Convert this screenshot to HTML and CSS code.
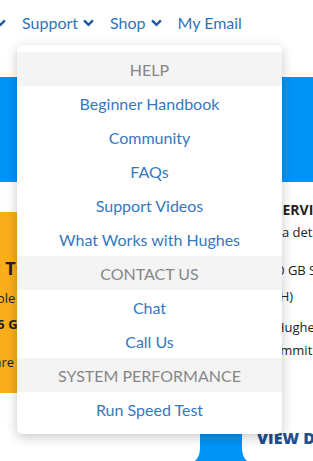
FILE: index.html
```html
<!DOCTYPE html>
<html lang="en">
	<head>
		<meta charset="UTF-8" />
		<meta name="viewport" content="width=device-width, initial-scale=1.0" />
		<title>Support menu</title>
		<link rel="stylesheet" href="styles.css">
	</head>
	<body>
		<div class="page">
			<nav class="topnav">
				<span class="navitem cut"><svg class="chev" viewBox="0 0 10 7"><path d="M1 1.2 5 5.2 9 1.2" /></svg></span>
				<span class="navitem">Support <svg class="chev" viewBox="0 0 10 7"><path d="M1 1.2 5 5.2 9 1.2" /></svg></span>
				<span class="navitem">Shop <svg class="chev" viewBox="0 0 10 7"><path d="M1 1.2 5 5.2 9 1.2" /></svg></span>
				<span class="navitem">My Email</span>
			</nav>

			<div class="gap-strip"></div>
			<div class="hero"></div>

			<div class="plans">
				<div class="card orange">
					<p class="bold big">UP TO</p>
					<p>available in</p>
					<p class="bold">25 GB,</p>
					<p class="late">compare to</p>
				</div>
				<div class="card info">
					<p class="bold head">FAST SERVICE</p>
					<p>Here's a detailed</p>
					<p class="sp1">Up to 50 GB Standard</p>
					<p class="sp2">(10 GB/H)</p>
					<p class="sp3">from Hughes</p>
					<p class="sp4">Zero commitment</p>
					<div class="cta">
						<svg class="tab" viewBox="0 0 56 48"><path d="M7 0H49V33C49 42 52 46 56 48H0C4 46 7 42 7 33Z" /></svg>
						<span class="viewlink">VIEW DETAILS</span>
					</div>
				</div>
			</div>

			<div class="dropdown">
				<div class="group">HELP</div>
				<a href="#">Beginner Handbook</a>
				<a href="#">Community</a>
				<a href="#">FAQs</a>
				<a href="#">Support Videos</a>
				<a href="#">What Works with Hughes</a>
				<div class="group">CONTACT US</div>
				<a href="#">Chat</a>
				<a href="#">Call Us</a>
				<div class="group">SYSTEM PERFORMANCE</div>
				<a href="#">Run Speed Test</a>
			</div>
		</div>
	</body>
</html>
```

FILE: styles.css
```css
body {
	margin: 0;
	background: #fff;
	font-family: Lato, "Open Sans", Arial, sans-serif;
}

.page {
	position: relative;
	width: 313px;
	height: 461px;
	overflow: hidden;
}

.topnav {
	height: 37px;
	display: flex;
	align-items: center;
	gap: 16px;
	padding-top: 7px;
	box-sizing: border-box;
	color: #2f74b9;
	font-size: 16px;
}

.navitem {
	display: flex;
	align-items: center;
	gap: 5px;
	white-space: nowrap;
}

.navitem.cut {
	margin-left: -5px;
}

.chev {
	width: 11px;
	height: 8px;
	margin-top: 2px;
}

.chev path {
	fill: none;
	stroke: #1b5aa0;
	stroke-width: 2.2;
}

.gap-strip {
	height: 40px;
}

.hero {
	height: 105px;
	background: #0094f7;
}

.plans {
	display: flex;
	justify-content: space-between;
	padding-top: 16px;
}

.card {
	font-family: "Open Sans", Arial, sans-serif;
	font-size: 13px;
	color: #222;
}

.card p {
	margin: 0;
	line-height: 23px;
	white-space: nowrap;
}

.orange {
	width: 150px;
	height: 181px;
	margin-left: -120px;
	margin-top: 14px;
	background: #f9ae1a;
	padding-top: 41px;
	box-sizing: border-box;
	text-align: right;
}

.orange .big {
	font-size: 18px;
	line-height: 30px;
	margin-bottom: 4px;
}

.orange p + p {
	margin-top: 3px;
}

.orange .late {
	margin-top: 15px;
}

.bold {
	font-weight: 700;
}

.info {
	width: 73px;
}

.info .head {
	font-size: 14px;
	text-indent: -2px;
}

.info .sp1 {
	margin-top: 15px;
	text-indent: -7px;
}

.info .sp2 {
	margin-top: 3px;
	text-indent: -5px;
}

.info .sp3 {
	margin-top: 8px;
	text-indent: 2px;
}

.info .sp4 {
	text-indent: -5px;
}

.cta {
	display: flex;
	align-items: flex-start;
	gap: 8px;
	margin-top: 52px;
	margin-left: -47px;
}

.tab {
	width: 56px;
	height: 48px;
	flex-shrink: 0;
}

.tab path {
	fill: #0094f7;
}

.viewlink {
	color: #1d4f91;
	font-weight: 800;
	font-size: 16px;
	line-height: 20px;
	margin-top: 14px;
	white-space: nowrap;
}

.dropdown {
	position: absolute;
	left: 17px;
	top: 45px;
	width: 265px;
	padding: 7px 0 8px;
	background: #fff;
	border-radius: 5px;
	box-shadow: 0 3px 12px rgba(0, 0, 0, 0.22);
	display: flex;
	flex-direction: column;
	font-size: 16px;
}

.dropdown a,
.dropdown .group {
	height: 34px;
	display: flex;
	align-items: center;
	justify-content: center;
	white-space: nowrap;
}

.dropdown a {
	color: #3479c0;
	text-decoration: none;
}

.dropdown .group {
	background: #f4f4f4;
	color: #878787;
}
```
